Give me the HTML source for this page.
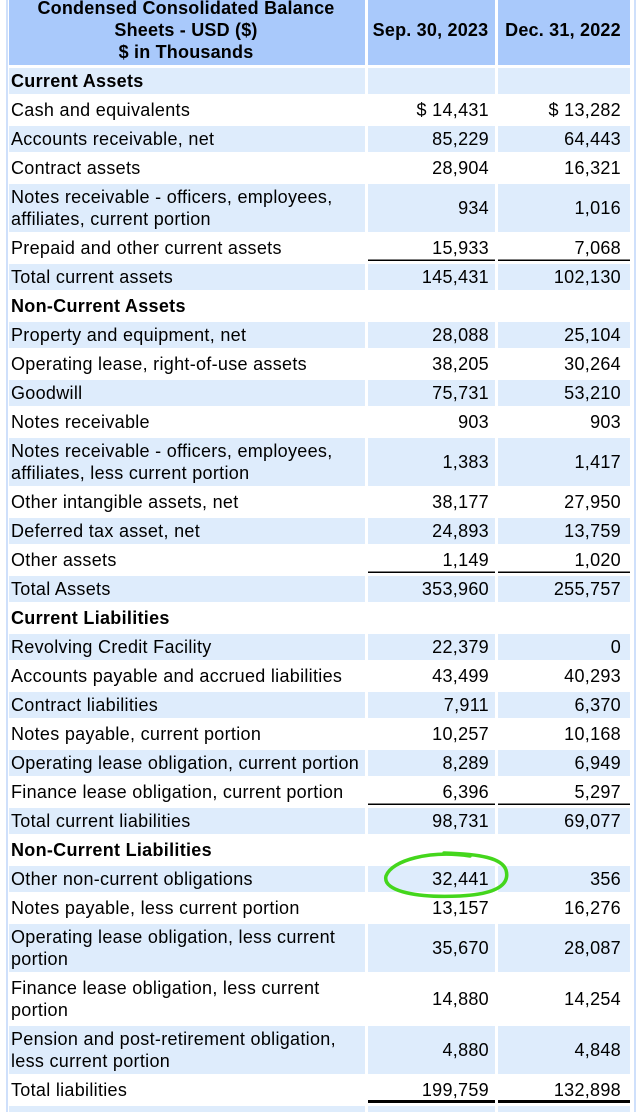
<!DOCTYPE html>
<html><head><meta charset="utf-8"><style>
html,body{margin:0;padding:0;background:#fff;width:640px;height:1112px;overflow:hidden;position:relative}
body{font-family:"Liberation Sans",Arial,sans-serif;font-size:18px;letter-spacing:0.3px;color:#000}
table{position:absolute;left:6px;top:-8px;border-collapse:separate;border-spacing:3px;table-layout:fixed;width:627px}
td,th{padding:2px 4px 2px 2px;line-height:22px;vertical-align:middle;font-size:18px}
th{background:#a9c9fb;font-weight:bold;text-align:center;letter-spacing:0.2px}
td.n{text-align:right;padding-right:6px}
td.n3{text-align:right;padding-right:9px}
tr.b td{background:#deecfc}
tr.h td:first-child{font-weight:bold}
td.u{box-shadow:inset 0 -1.5px 0 #000}
td.uu{box-shadow:inset 0 -3px 0 #000}
.edge{position:absolute;top:0;width:2px;height:1112px;background:#cfe0fb}
</style></head><body>
<div class="edge" style="left:6px"></div>
<div class="edge" style="left:634px"></div>
<table>
<colgroup><col style="width:356px"><col style="width:127px"><col style="width:132px"></colgroup>
<tr><th>Condensed Consolidated Balance Sheets - USD ($)<br>$ in Thousands</th><th>Sep. 30, 2023</th><th>Dec. 31, 2022</th></tr>
<tr class="b h"><td>Current Assets</td><td></td><td></td></tr>
<tr><td>Cash and equivalents</td><td class="n">$ 14,431</td><td class="n n3">$ 13,282</td></tr>
<tr class="b"><td>Accounts receivable, net</td><td class="n">85,229</td><td class="n n3">64,443</td></tr>
<tr><td>Contract assets</td><td class="n">28,904</td><td class="n n3">16,321</td></tr>
<tr class="b"><td>Notes receivable - officers, employees, affiliates, current portion</td><td class="n">934</td><td class="n n3">1,016</td></tr>
<tr><td>Prepaid and other current assets</td><td class="n u">15,933</td><td class="n n3 u">7,068</td></tr>
<tr class="b"><td>Total current assets</td><td class="n">145,431</td><td class="n n3">102,130</td></tr>
<tr class="h"><td>Non-Current Assets</td><td></td><td></td></tr>
<tr class="b"><td>Property and equipment, net</td><td class="n">28,088</td><td class="n n3">25,104</td></tr>
<tr><td>Operating lease, right-of-use assets</td><td class="n">38,205</td><td class="n n3">30,264</td></tr>
<tr class="b"><td>Goodwill</td><td class="n">75,731</td><td class="n n3">53,210</td></tr>
<tr><td>Notes receivable</td><td class="n">903</td><td class="n n3">903</td></tr>
<tr class="b"><td>Notes receivable - officers, employees, affiliates, less current portion</td><td class="n">1,383</td><td class="n n3">1,417</td></tr>
<tr><td>Other intangible assets, net</td><td class="n">38,177</td><td class="n n3">27,950</td></tr>
<tr class="b"><td>Deferred tax asset, net</td><td class="n">24,893</td><td class="n n3">13,759</td></tr>
<tr><td>Other assets</td><td class="n u">1,149</td><td class="n n3 u">1,020</td></tr>
<tr class="b"><td>Total Assets</td><td class="n">353,960</td><td class="n n3">255,757</td></tr>
<tr class="h"><td>Current Liabilities</td><td></td><td></td></tr>
<tr class="b"><td>Revolving Credit Facility</td><td class="n">22,379</td><td class="n n3">0</td></tr>
<tr><td>Accounts payable and accrued liabilities</td><td class="n">43,499</td><td class="n n3">40,293</td></tr>
<tr class="b"><td>Contract liabilities</td><td class="n">7,911</td><td class="n n3">6,370</td></tr>
<tr><td>Notes payable, current portion</td><td class="n">10,257</td><td class="n n3">10,168</td></tr>
<tr class="b"><td>Operating lease obligation, current portion</td><td class="n">8,289</td><td class="n n3">6,949</td></tr>
<tr><td>Finance lease obligation, current portion</td><td class="n u">6,396</td><td class="n n3 u">5,297</td></tr>
<tr class="b"><td>Total current liabilities</td><td class="n">98,731</td><td class="n n3">69,077</td></tr>
<tr class="h"><td>Non-Current Liabilities</td><td></td><td></td></tr>
<tr class="b"><td>Other non-current obligations</td><td class="n">32,441</td><td class="n n3">356</td></tr>
<tr><td>Notes payable, less current portion</td><td class="n">13,157</td><td class="n n3">16,276</td></tr>
<tr class="b"><td>Operating lease obligation, less current portion</td><td class="n">35,670</td><td class="n n3">28,087</td></tr>
<tr><td>Finance lease obligation, less current portion</td><td class="n">14,880</td><td class="n n3">14,254</td></tr>
<tr class="b"><td>Pension and post-retirement obligation, less current portion</td><td class="n">4,880</td><td class="n n3">4,848</td></tr>
<tr><td>Total liabilities</td><td class="n uu">199,759</td><td class="n n3 uu">132,898</td></tr>
<tr class="b"><td>&nbsp;</td><td></td><td></td></tr>
</table>
<svg style="position:absolute;left:0;top:0" width="640" height="1112">
<path d="M470 856 C430 850 392 860 386 876 C382 892 420 898 460 896 C498 894 510 884 506 870 C502 858 480 854 444 853" fill="none" stroke="#44d61c" stroke-width="3.5" stroke-linecap="round"/>
</svg>
</body></html>
